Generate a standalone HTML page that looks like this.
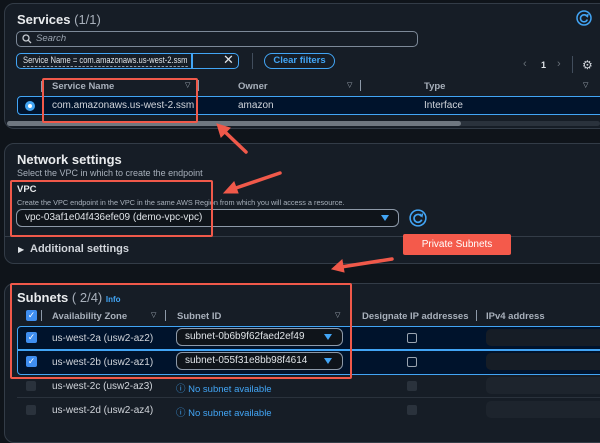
<!DOCTYPE html><html><head><style>
*{box-sizing:border-box;margin:0;padding:0}
body{width:600px;height:427px;background:#0f141a;font-family:"Liberation Sans",sans-serif;color:#d1d5db;position:relative;overflow:hidden}
.a{position:absolute;white-space:nowrap}
.panel{position:absolute;background:#161d26;border:1px solid #333c47;border-radius:10px}
.t{font-size:10px;color:#d1d5db}
.h{font-size:9.5px;color:#a8b0bb;font-weight:bold}
.sep{position:absolute;width:1px;background:#8d99a8;height:11px}
.red{position:absolute;border:2.5px solid #f0594a;border-radius:2px}
.cb{position:absolute;width:11px;height:11px;border-radius:2px;background:#3f8ef0;color:#fff;font-size:9px;line-height:11px;text-align:center}
.cbo{position:absolute;width:10px;height:10px;border:1.5px solid #9aa4b0;border-radius:2px}
.cbd{position:absolute;width:10px;height:10px;border-radius:2px;background:#2a323c}
.sel{position:absolute;border:1.5px solid #8d99a8;border-radius:6px;background:#0f141a;font-size:10px;color:#e0e4e8;padding-left:8px}
.tri{position:absolute;width:0;height:0;border-left:4px solid transparent;border-right:4px solid transparent;border-top:6px solid #42a5f5}
.info{color:#42a5f5;font-size:9.5px}
</style></head><body>
<!-- panel 1 -->
<div class="panel" style="left:4px;top:3px;width:610px;height:126px"></div>
<div class="a" style="left:17px;top:12px;font-size:13px;font-weight:bold;color:#e9ebed">Services <span style="font-weight:normal;color:#a8b0bb">(1/1)</span></div>
<svg class="a" style="left:576px;top:10px" width="16" height="16" viewBox="0 0 16 16"><circle cx="8" cy="8" r="7" fill="none" stroke="#42a5f5" stroke-width="1.5"/><path d="M11 6.5A3.5 3.5 0 1 0 11.3 9.5" fill="none" stroke="#42a5f5" stroke-width="1.6"/><path d="M9.5 4.5L11.5 6.5 12 4" fill="none" stroke="#42a5f5" stroke-width="1.4"/></svg>
<div class="a" style="left:16px;top:31px;width:402px;height:16px;border:1.5px solid #7d8998;border-radius:5px"></div>
<svg class="a" style="left:22px;top:34px" width="10" height="10"><circle cx="4" cy="4" r="3" fill="none" stroke="#c6cbd1" stroke-width="1.3"/><path d="M6.2 6.2L9 9" stroke="#c6cbd1" stroke-width="1.3"/></svg>
<div class="a" style="left:36px;top:33px;font-size:9.5px;font-style:italic;color:#9aa4b0">Search</div>
<div class="a" style="left:16px;top:53px;width:223px;height:16px;border:1.5px solid #42a5f5;border-radius:5px"></div>
<div class="a" style="left:191px;top:53px;width:1.5px;height:16px;background:#42a5f5"></div>
<div class="a" style="left:23px;top:55px;font-size:9.5px;transform:scaleX(0.8);transform-origin:0 0;color:#e0e4e8;border-bottom:1px dashed #8d99a8">Service Name = com.amazonaws.us-west-2.ssm</div>
<div class="a" style="left:223px;top:52px;font-size:13px;color:#e0e4e8">✕</div>
<div class="a" style="left:252px;top:53px;width:1px;height:16px;background:#414d5c"></div>
<div class="a" style="left:264px;top:53px;width:71px;height:16px;border:1.5px solid #42a5f5;border-radius:9px;font-size:9.5px;font-weight:bold;color:#42a5f5;text-align:center;line-height:13px">Clear filters</div>
<div class="a" style="left:523px;top:58px;font-size:11px;color:#687078">‹</div>
<div class="a" style="left:541px;top:60px;font-size:9px;font-weight:bold;color:#e0e4e8">1</div>
<div class="a" style="left:557px;top:58px;font-size:11px;color:#687078">›</div>
<div class="a" style="left:572px;top:56px;width:1px;height:17px;background:#414d5c"></div>
<div class="a" style="left:582px;top:58px;font-size:12px;color:#d1d5db">⚙</div>
<div class="sep" style="left:41px;top:81px"></div>
<div class="a h" style="left:52px;top:81px">Service Name</div>
<div class="a" style="left:185px;top:81px;font-size:7px;color:#a8b0bb">▽</div>
<div class="sep" style="left:198px;top:80px"></div>
<div class="a h" style="left:238px;top:81px">Owner</div>
<div class="a" style="left:347px;top:81px;font-size:7px;color:#a8b0bb">▽</div>
<div class="sep" style="left:360px;top:80px"></div>
<div class="a h" style="left:424px;top:81px">Type</div>
<div class="a" style="left:583px;top:81px;font-size:7px;color:#a8b0bb">▽</div>
<div class="a" style="left:17px;top:96px;width:590px;height:19px;background:#00132c;border:1.5px solid #42a5f5;border-radius:4px"></div>
<div class="a" style="left:25px;top:101px;width:10px;height:10px;border-radius:50%;background:#fff;border:3px solid #42a5f5"></div>
<div class="a t" style="left:52px;top:100px">com.amazonaws.us-west-2.ssm</div>
<div class="a t" style="left:238px;top:100px">amazon</div>
<div class="a t" style="left:424px;top:100px">Interface</div>
<div class="a" style="left:7px;top:121px;width:593px;height:5px;background:#2a323c;border-radius:3px"></div>
<div class="a" style="left:7px;top:121px;width:454px;height:5px;background:#6f7780;border-radius:3px"></div>
<div class="red" style="left:42px;top:78px;width:156px;height:45px"></div>
<!-- panel 2 -->
<div class="panel" style="left:4px;top:143px;width:610px;height:121px"></div>
<div class="a" style="left:17px;top:152px;font-size:13px;font-weight:bold;color:#e9ebed">Network settings</div>
<div class="a" style="left:17px;top:168px;font-size:9px;color:#a8b0bb">Select the VPC in which to create the endpoint</div>
<div class="a" style="left:17px;top:184px;font-size:9.5px;font-weight:bold;color:#e9ebed">VPC</div>
<div class="a" style="left:17px;top:198px;font-size:7.3px;color:#a8b0bb">Create the VPC endpoint in the VPC in the same AWS Region from which you will access a resource.</div>
<div class="sel" style="left:16px;top:209px;width:383px;height:18px;line-height:16px">vpc-03af1e04f436efe09 (demo-vpc-vpc)</div>
<div class="tri" style="left:381px;top:215px"></div>
<svg class="a" style="left:409px;top:209px" width="18" height="18" viewBox="0 0 16 16"><circle cx="8" cy="8" r="7" fill="none" stroke="#42a5f5" stroke-width="1.4"/><path d="M11 6.5A3.5 3.5 0 1 0 11.3 9.5" fill="none" stroke="#42a5f5" stroke-width="1.5"/><path d="M9.5 4.5L11.5 6.5 12 4" fill="none" stroke="#42a5f5" stroke-width="1.3"/></svg>
<div class="a" style="left:5px;top:236px;width:600px;height:1px;background:#333c47"></div>
<div class="a" style="left:18px;top:245px;font-size:8px;color:#e0e4e8">▶</div>
<div class="a" style="left:30px;top:243px;font-size:11px;font-weight:bold;color:#d1d5db">Additional settings</div>
<div class="red" style="left:10px;top:180px;width:203px;height:57px"></div>
<div class="a" style="left:403px;top:234px;width:108px;height:21px;background:#f45a4b;border-radius:2px;color:#fff;font-size:10px;text-align:center;line-height:21px">Private Subnets</div>
<!-- panel 3 -->
<div class="panel" style="left:4px;top:283px;width:610px;height:160px"></div>
<div class="a" style="left:17px;top:290px;font-size:13px;font-weight:bold;color:#e9ebed">Subnets <span style="font-weight:normal;color:#a8b0bb">( 2/4)</span> <span style="font-size:8px;color:#42a5f5;font-weight:bold">Info</span></div>
<div class="cb" style="left:26px;top:310px">✓</div>
<div class="sep" style="left:41px;top:310px"></div>
<div class="a h" style="left:52px;top:311px">Availability Zone</div>
<div class="a" style="left:151px;top:311px;font-size:7px;color:#a8b0bb">▽</div>
<div class="sep" style="left:165px;top:310px"></div>
<div class="a h" style="left:177px;top:311px">Subnet ID</div>
<div class="a" style="left:335px;top:311px;font-size:7px;color:#a8b0bb">▽</div>
<div class="a h" style="left:362px;top:311px">Designate IP addresses</div>
<div class="sep" style="left:476px;top:310px"></div>
<div class="a h" style="left:486px;top:311px">IPv4 address</div>
<div class="a" style="left:17px;top:326px;width:590px;height:49px;background:#00132c;border:1.5px solid #42a5f5;border-radius:4px"></div>
<div class="a" style="left:17px;top:349px;width:590px;height:1.5px;background:#42a5f5"></div>
<div class="cb" style="left:26px;top:332px">✓</div>
<div class="a t" style="left:52px;top:333px">us-west-2a (usw2-az2)</div>
<div class="sel" style="left:176px;top:328px;width:167px;height:18px;line-height:16px">subnet-0b6b9f62faed2ef49</div>
<div class="tri" style="left:324px;top:334px"></div>
<div class="cbo" style="left:407px;top:333px"></div>
<div class="a" style="left:486px;top:329px;width:120px;height:17px;background:#161d26;border-radius:5px"></div>
<div class="cb" style="left:26px;top:356px">✓</div>
<div class="a t" style="left:52px;top:357px">us-west-2b (usw2-az1)</div>
<div class="sel" style="left:176px;top:352px;width:167px;height:18px;line-height:16px">subnet-055f31e8bb98f4614</div>
<div class="tri" style="left:324px;top:358px"></div>
<div class="cbo" style="left:407px;top:357px"></div>
<div class="a" style="left:486px;top:353px;width:120px;height:17px;background:#161d26;border-radius:5px"></div>
<div class="cbd" style="left:26px;top:381px"></div>
<div class="a t" style="left:52px;top:381px">us-west-2c (usw2-az3)</div>
<div class="a info" style="left:176px;top:381px">ⓘ No subnet available</div>
<div class="cbd" style="left:407px;top:381px"></div>
<div class="a" style="left:486px;top:377px;width:120px;height:17px;background:#1d242d;border-radius:5px"></div>
<div class="a" style="left:17px;top:397px;width:590px;height:1px;background:#2a323c"></div>
<div class="cbd" style="left:26px;top:405px"></div>
<div class="a t" style="left:52px;top:405px">us-west-2d (usw2-az4)</div>
<div class="a info" style="left:176px;top:405px">ⓘ No subnet available</div>
<div class="cbd" style="left:407px;top:405px"></div>
<div class="a" style="left:486px;top:401px;width:120px;height:17px;background:#1d242d;border-radius:5px"></div>
<div class="red" style="left:10px;top:283px;width:342px;height:96px"></div>
<!-- arrows -->
<svg class="a" style="left:0;top:0" width="600" height="427">
<g stroke="#f0594a" stroke-width="3.5" fill="#f0594a" stroke-linecap="round">
<line x1="246" y1="152" x2="224" y2="131"/><polygon points="217,124 230,128 221,137" stroke-width="1"/>
<line x1="280" y1="173" x2="233" y2="189"/><polygon points="224,193 234,182 238,193" stroke-width="1"/>
<line x1="392" y1="259" x2="341" y2="267"/><polygon points="332,269 342,260 344,272" stroke-width="1"/>
</g></svg>
</body></html>
